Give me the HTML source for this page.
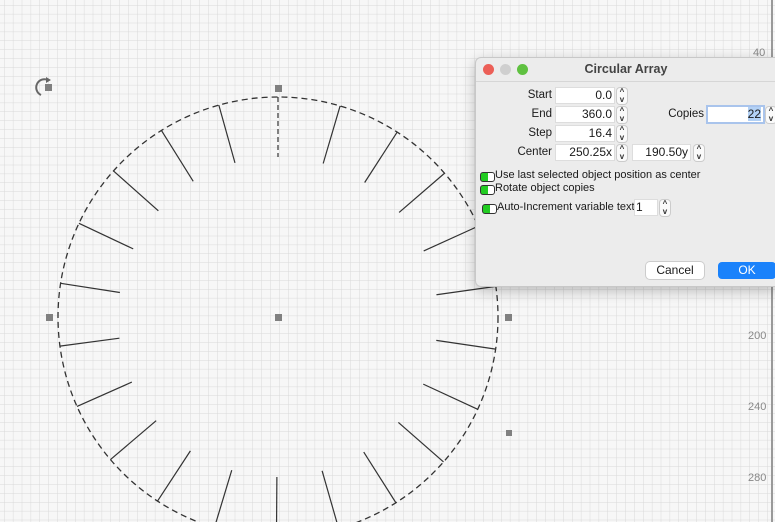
<!DOCTYPE html><html><head><style>
body{margin:0;width:775px;height:522px;overflow:hidden;background:#f7f7f7;font-family:"Liberation Sans",sans-serif}
svg{position:absolute;left:0;top:0}
.dlg{position:absolute;left:475px;top:57px;width:300px;height:228px;background:#ececec;border:1px solid #c8c8c8;border-radius:6px 0 0 6px;box-shadow:0 4px 14px rgba(0,0,0,.25);font-size:11px;color:#1a1a1a}
.tb{height:23px;border-bottom:1px solid #d6d6d6;text-align:center;line-height:23px;font-weight:bold;font-size:12.5px;color:#444}
.dot{position:absolute;top:6px;width:11px;height:11px;border-radius:50%}
.a{position:absolute}
.lbl{position:absolute;text-align:right;font-size:11.5px}
.in{position:absolute;background:#fff;height:15px;text-align:right;line-height:15px;font-size:12px;padding-right:2px;box-sizing:border-box;box-shadow:0 0 0 1px #ddd}
.sp{position:absolute;width:10px;height:16px;font-size:8px;line-height:8px;text-align:center;color:#333;font-weight:bold;background:#fafafa;border-radius:3px;box-shadow:0 0 0 1px #ccc}
.tg{position:absolute;width:13px;height:8px;border:1px solid #333;border-radius:3px;background:linear-gradient(90deg,#2c2 55%,#fff 55%)}
.btn{position:absolute;height:17px;line-height:17px;text-align:center;border-radius:4px;font-size:12px}
</style></head><body>
<svg width="775" height="522">
<defs><pattern id="g" x="4" y="5" width="8.875" height="8.875" patternUnits="userSpaceOnUse"><path d="M0 0H8.875M0 0V8.875" stroke="#d9d9d9" stroke-width="1" fill="none"/></pattern></defs>
<rect width="775" height="522" fill="url(#g)"/>
<line x1="772" y1="0" x2="772" y2="522" stroke="#999" stroke-width="2"/>
<g fill="#888" font-size="11" font-family="Liberation Sans">
<text x="753" y="56">40</text><text x="748" y="339">200</text><text x="748" y="410">240</text><text x="748" y="481">280</text></g>
<circle cx="278" cy="317" r="220" fill="none" stroke="#333" stroke-width="1.3" stroke-dasharray="6,4"/>
<g stroke="#333" stroke-width="1.2">
<line x1="278" y1="97" x2="278" y2="157" stroke-dasharray="5,3"/>
<line x1="278" y1="97" x2="278" y2="157" transform="rotate(16.4 278 317)"/>
<line x1="278" y1="97" x2="278" y2="157" transform="rotate(32.8 278 317)"/>
<line x1="278" y1="97" x2="278" y2="157" transform="rotate(49.2 278 317)"/>
<line x1="278" y1="97" x2="278" y2="157" transform="rotate(65.6 278 317)"/>
<line x1="278" y1="97" x2="278" y2="157" transform="rotate(82 278 317)"/>
<line x1="278" y1="97" x2="278" y2="157" transform="rotate(98.4 278 317)"/>
<line x1="278" y1="97" x2="278" y2="157" transform="rotate(114.8 278 317)"/>
<line x1="278" y1="97" x2="278" y2="157" transform="rotate(131.2 278 317)"/>
<line x1="278" y1="97" x2="278" y2="157" transform="rotate(147.6 278 317)"/>
<line x1="278" y1="97" x2="278" y2="157" transform="rotate(164 278 317)"/>
<line x1="278" y1="97" x2="278" y2="157" transform="rotate(180.4 278 317)"/>
<line x1="278" y1="97" x2="278" y2="157" transform="rotate(196.8 278 317)"/>
<line x1="278" y1="97" x2="278" y2="157" transform="rotate(213.2 278 317)"/>
<line x1="278" y1="97" x2="278" y2="157" transform="rotate(229.6 278 317)"/>
<line x1="278" y1="97" x2="278" y2="157" transform="rotate(246 278 317)"/>
<line x1="278" y1="97" x2="278" y2="157" transform="rotate(262.4 278 317)"/>
<line x1="278" y1="97" x2="278" y2="157" transform="rotate(278.8 278 317)"/>
<line x1="278" y1="97" x2="278" y2="157" transform="rotate(295.2 278 317)"/>
<line x1="278" y1="97" x2="278" y2="157" transform="rotate(311.6 278 317)"/>
<line x1="278" y1="97" x2="278" y2="157" transform="rotate(328 278 317)"/>
<line x1="278" y1="97" x2="278" y2="157" transform="rotate(344.4 278 317)"/>
</g>
<g fill="#808080"><rect x="45" y="84" width="7" height="7"/><rect x="275" y="85" width="7" height="7"/><rect x="46" y="314" width="7" height="7"/><rect x="275" y="314" width="7" height="7"/><rect x="505" y="314" width="7" height="7"/><rect x="506" y="430" width="6" height="6"/></g>
<path d="M41 95 A8 8 0 0 1 48 80" fill="none" stroke="#666" stroke-width="2"/><path d="M46 77 L51 80 L46 83Z" fill="#666"/>
</svg>
<div class="dlg">
<div class="tb">Circular Array</div>
<div class="dot" style="left:7px;background:#ec5f57"></div><div class="dot" style="left:24px;background:#cfcfcf"></div><div class="dot" style="left:41px;background:#5fc140"></div>
<div class="lbl" style="left:20px;width:56px;top:31px">Start</div>
<div class="lbl" style="left:20px;width:56px;top:50px">End</div>
<div class="lbl" style="left:20px;width:56px;top:69px">Step</div>
<div class="lbl" style="left:20px;width:56px;top:88px">Center</div>
<div class="in" style="left:80px;width:58px;top:30px">0.0</div>
<div class="in" style="left:80px;width:58px;top:49px">360.0</div>
<div class="in" style="left:80px;width:58px;top:68px">16.4</div>
<div class="in" style="left:80px;width:58px;top:87px">250.25x</div>
<div class="in" style="left:157px;width:57px;top:87px">190.50y</div>
<div class="sp" style="left:141px;top:30px">^<br>v</div>
<div class="sp" style="left:141px;top:49px">^<br>v</div>
<div class="sp" style="left:141px;top:68px">^<br>v</div>
<div class="sp" style="left:141px;top:87px">^<br>v</div>
<div class="sp" style="left:218px;top:87px">^<br>v</div>
<div class="lbl" style="left:180px;width:48px;top:50px">Copies</div>
<div class="in" style="left:232px;width:55px;top:49px;box-shadow:0 0 0 2px #a9c4ec"><span style="background:#b3d1f5">22</span></div>
<div class="sp" style="left:290px;top:49px">^<br>v</div>
<div class="tg" style="left:4px;top:114px"></div><div class="a" style="left:19px;top:111px">Use last selected object position as center</div>
<div class="tg" style="left:4px;top:127px"></div><div class="a" style="left:19px;top:124px">Rotate object copies</div>
<div class="tg" style="left:6px;top:146px"></div><div class="a" style="left:21px;top:143px">Auto-Increment variable text</div>
<div class="in" style="left:159px;width:22px;top:142px;text-align:left;padding-left:1px">1</div>
<div class="sp" style="left:184px;top:142px">^<br>v</div>
<div class="btn" style="left:170px;top:204px;width:58px;background:#fff;box-shadow:0 0 0 1px #ccc">Cancel</div>
<div class="btn" style="left:242px;top:204px;width:58px;background:#1a82fb;color:#fff">OK</div>
</div>
</body></html>
